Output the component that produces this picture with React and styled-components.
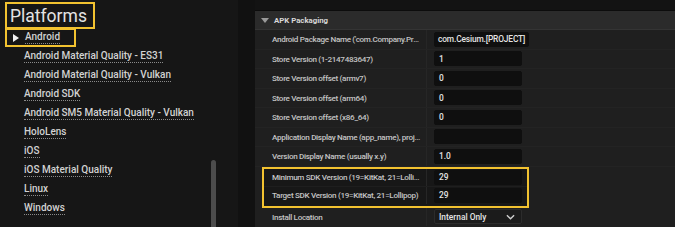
import React from 'react'
import styled, { createGlobalStyle } from 'styled-components'

const GlobalStyle = createGlobalStyle`
  html, body {
    margin: 0;
    padding: 0;
    background: #151515;
  }
  body {
    font-family: Roboto, "Liberation Sans", sans-serif;
    width: 675px;
    height: 227px;
    overflow: hidden;
  }
`

const platforms = [
  'Android Material Quality - ES31',
  'Android Material Quality - Vulkan',
  'Android SDK',
  'Android SM5 Material Quality - Vulkan',
  'HoloLens',
  'iOS',
  'iOS Material Quality',
  'Linux',
  'Windows',
]

const rows = [
  { label: "Android Package Name ('com.Company.Project')", value: 'com.Cesium.[PROJECT]', wide: true },
  { label: 'Store Version (1-2147483647)', value: '1' },
  { label: 'Store Version offset (armv7)', value: '0' },
  { label: 'Store Version offset (arm64)', value: '0' },
  { label: 'Store Version offset (x86_64)', value: '0' },
  { label: 'Application Display Name (app_name), project name if blank', value: '' },
  { label: 'Version Display Name (usually x.y)', value: '1.0' },
]

const sdkRows = [
  { label: 'Minimum SDK Version (19=KitKat, 21=Lollipop)', value: '29' },
  { label: 'Target SDK Version (19=KitKat, 21=Lollipop)', value: '29' },
]

export default function App() {
  return (
    <>
      <GlobalStyle />
      <Screen>
        <Sidebar>
          <Title>Platforms</Title>
          <Selected>
            <Arrow />
            <Item>Android</Item>
          </Selected>
          <List>
            {platforms.map((p) => (
              <ListRow key={p}>
                <Item>{p}</Item>
              </ListRow>
            ))}
          </List>
          <Scrollbar />
        </Sidebar>
        <Splitter />
        <Details>
          <TopStrip />
          <Header>
            <Caret />
            APK Packaging
          </Header>
          {rows.map((r) => (
            <Row key={r.label}>
              <Label>{r.label}</Label>
              <ValueCell>
                <Field $wide={r.wide}>{r.value}</Field>
              </ValueCell>
              <Tail />
            </Row>
          ))}
          <HighlightRow>
            <Highlight>
              {sdkRows.map((r) => (
                <Row key={r.label} $inner>
                  <Label $inner>{r.label}</Label>
                  <ValueCell $inner>
                    <Field>{r.value}</Field>
                  </ValueCell>
                </Row>
              ))}
            </Highlight>
            <Tail />
          </HighlightRow>
          <Row>
            <Label>Install Location</Label>
            <ValueCell>
              <Field $select>
                Internal Only
                <Chevron viewBox="0 0 10 6">
                  <path d="M1 1 L5 5 L9 1" fill="none" stroke="#d0d0d0" strokeWidth="1.5" />
                </Chevron>
              </Field>
            </ValueCell>
            <Tail />
          </Row>
        </Details>
      </Screen>
    </>
  )
}

const Screen = styled.div`
  display: flex;
  width: 675px;
  height: 227px;
  background: #151515;
  overflow: hidden;
`

const Sidebar = styled.div`
  position: relative;
  width: 238px;
  flex-shrink: 0;
  background: #161616;
  padding: 2px 0 0 5px;
  box-sizing: border-box;
`

const Title = styled.div`
  display: inline-block;
  border: 2px solid #f2c230;
  padding: 1px 6px 0 3px;
  font-size: 17.5px;
  line-height: 22px;
  color: #e4e4e4;
`

const Selected = styled.div`
  display: flex;
  align-items: center;
  width: 71px;
  height: 19px;
  margin-top: -1px;
  border: 2px solid #f2c230;
  box-sizing: border-box;
  padding-left: 6px;
`

const Arrow = styled.span`
  width: 0;
  height: 0;
  border-top: 4px solid transparent;
  border-bottom: 4px solid transparent;
  border-left: 6px solid #f0f0f0;
  margin-right: 6px;
`

const List = styled.div`
  display: flex;
  flex-direction: column;
  padding-left: 19px;
`

const ListRow = styled.div`
  height: 19px;
  display: flex;
  align-items: center;
`

const Item = styled.span`
  font-size: 10px;
  font-weight: 500;
  color: #d2d2d2;
  line-height: 12px;
  border-bottom: 1px dotted #8a8a8a;
`

const Scrollbar = styled.div`
  position: absolute;
  left: 211px;
  top: 160px;
  width: 5px;
  height: 80px;
  border-radius: 3px;
  background: #4c4c4c;
`

const Splitter = styled.div`
  width: 17px;
  flex-shrink: 0;
  background: #111111;
`

const Details = styled.div`
  flex: 1;
  display: flex;
  flex-direction: column;
  background: #1d1d1d;
`

const TopStrip = styled.div`
  height: 10px;
  flex-shrink: 0;
  background: #131313;
  border-bottom: 1px solid #0c0c0c;
`

const Header = styled.div`
  display: flex;
  align-items: center;
  height: 18px;
  flex-shrink: 0;
  padding-left: 6px;
  background: #2b2b2b;
  border-bottom: 1px solid #343434;
  font-size: 7.8px;
  font-weight: 700;
  color: #d8d8d8;
`

const Caret = styled.span`
  width: 0;
  height: 0;
  border-left: 4px solid transparent;
  border-right: 4px solid transparent;
  border-top: 5px solid #9a9a9a;
  margin-right: 5px;
`

const Row = styled.div`
  display: flex;
  align-items: stretch;
  flex-shrink: 0;
  height: ${(p) => (p.$inner ? '18px' : '19.5px')};
  border-bottom: 1px solid ${(p) => (p.$inner ? '#1e1e1e' : '#232323')};
  box-sizing: border-box;
  background: ${(p) => (p.$inner ? '#171717' : '#1f1f1f')};
  &:last-child {
    border-bottom-color: transparent;
  }
`

const Label = styled.div`
  width: ${(p) => (p.$inner ? '163px' : '172px')};
  flex-shrink: 0;
  padding: 0 3px 0 ${(p) => (p.$inner ? '8px' : '17px')};
  box-sizing: border-box;
  font-size: 8.1px;
  font-weight: 500;
  letter-spacing: -0.32px;
  color: #c4c4c4;
  border-right: 1px solid #262626;
  white-space: nowrap;
  overflow: hidden;
  text-overflow: ellipsis;
  line-height: ${(p) => (p.$inner ? '17px' : '18.5px')};
`

const ValueCell = styled.div`
  width: ${(p) => (p.$inner ? '100px' : '106px')};
  flex-shrink: 0;
  display: flex;
  align-items: center;
  padding-left: 7px;
  box-sizing: border-box;
`

const Field = styled.div`
  display: flex;
  align-items: center;
  justify-content: space-between;
  width: ${(p) => (p.$wide ? '95px' : '88px')};
  height: 15px;
  padding: 0 3px 0 ${(p) => (p.$wide ? '3px' : '4px')};
  box-sizing: border-box;
  background: ${(p) => (p.$select ? '#1b1b1b' : '#0f0f0f')};
  border: 1px solid ${(p) => (p.$select ? '#2c2c2c' : '#0f0f0f')};
  border-radius: 2px;
  font-size: 8.4px;
  font-weight: 500;
  letter-spacing: ${(p) => (p.$wide ? '-0.15px' : '0')};
  color: #e4e4e4;
  white-space: nowrap;
  overflow: hidden;
`

const Chevron = styled.svg`
  width: 9px;
  height: 6px;
  margin-right: 3px;
`

const Tail = styled.div`
  flex: 1;
`

const HighlightRow = styled.div`
  display: flex;
  flex-shrink: 0;
  padding-left: 7px;
  background: #1f1f1f;
  height: 41px;
`

const Highlight = styled.div`
  width: 267px;
  border: 2px solid #f2c230;
  box-sizing: border-box;
  display: flex;
  flex-direction: column;
  background: #171717;
  overflow: hidden;
`
